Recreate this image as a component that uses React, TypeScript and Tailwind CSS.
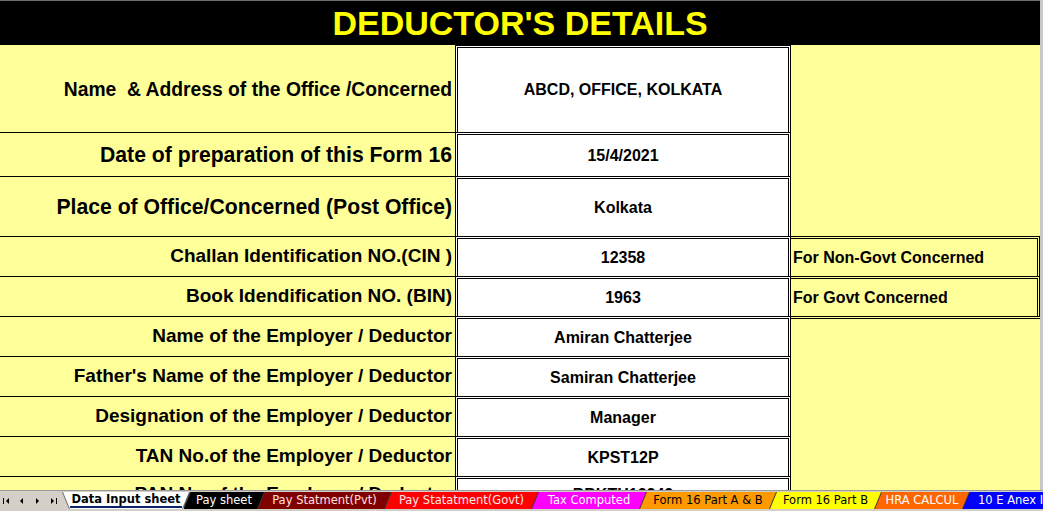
import React from "react";

interface SheetRow {
  label: string;
  value: string;
  size: string;
}

const rows: SheetRow[] = [
  { label: "Name  & Address of the Office /Concerned", value: "ABCD, OFFICE, KOLKATA", size: "text-[19.3px] pt-[3px]" },
  { label: "Date of preparation of this Form 16", value: "15/4/2021", size: "text-[21.2px]" },
  { label: "Place of Office/Concerned (Post Office)", value: "Kolkata", size: "text-[21.2px]" },
  { label: "Challan Identification NO.(CIN )", value: "12358", size: "text-[19px]" },
  { label: "Book Idendification NO. (BIN)", value: "1963", size: "text-[19px]" },
  { label: "Name of the Employer / Deductor", value: "Amiran Chatterjee", size: "text-[19px]" },
  { label: "Father's Name of the Employer / Deductor", value: "Samiran Chatterjee", size: "text-[19px]" },
  { label: "Designation of the Employer / Deductor", value: "Manager", size: "text-[19px]" },
  { label: "TAN No.of the Employer / Deductor", value: "KPST12P", size: "text-[19px]" },
  { label: "PAN No.of the Employer / Deductor", value: "BBKTH12342", size: "text-[19px]" },
];

const tabs = [
  { label: "Pay sheet", cls: "w-[80px] justify-center bg-black text-white" },
  { label: "Pay Statment(Pvt)", cls: "w-[133px] justify-center bg-[#800000] text-[#ffe0e0]" },
  { label: "Pay Statatment(Govt)", cls: "w-[153px] justify-center bg-[#ff0000] text-[#ffe8e8]" },
  { label: "Tax Computed", cls: "w-[114px] justify-center bg-[#ff00ff] text-white" },
  { label: "Form 16 Part A & B", cls: "w-[136px] justify-center bg-[#ff9900] text-black" },
  { label: "Form 16 Part B", cls: "w-[111px] justify-center bg-[#ffff00] text-black" },
  { label: "HRA CALCUL", cls: "w-[94px] justify-center bg-[#ff6600] text-white" },
  { label: "10 E Anex I", cls: "w-[110px] justify-start pl-[15px] bg-[#0000ff] text-white" },
];

const NavArrows = () => (
  <svg width="62" height="17" viewBox="0 0 62 17" className="shrink-0">
    {/* first */}
    <rect x="3" y="6" width="1" height="6" fill="#000" />
    <path d="M9 6 L6 9 L9 12 Z" fill="#000" />
    {/* prev */}
    <path d="M23 6 L20 9 L23 12 Z" fill="#000" />
    {/* next */}
    <path d="M36 6 L39 9 L36 12 Z" fill="#000" />
    {/* last */}
    <path d="M51 6 L54 9 L51 12 Z" fill="#000" />
    <rect x="56" y="6" width="1" height="6" fill="#000" />
  </svg>
);

export default function App() {
  return (
    <div className="flex h-[511px] w-[1043px] flex-col overflow-hidden bg-[#c8c8c8] font-['Liberation_Sans',Arial,sans-serif]">
      <div className="flex-1 overflow-hidden">
        <div className="w-[1040px]">
          {/* Title */}
          <div className="flex h-[45px] items-center justify-center border-t border-[#6d6d6d] bg-black">
            <span className="text-[34px] font-bold leading-none text-[#ffff00]">DEDUCTOR'S DETAILS</span>
          </div>

          {/* Sheet grid */}
          <div className="grid grid-cols-[455px_336px_249px] grid-rows-[87px_44px_60px_40px_40px_40px_40px_40px_40px_40px] bg-[#ffff99] text-black">
            {rows.map((row, i) => {
              const last = i === rows.length - 1;
              return (
                <React.Fragment key={i}>
                  <div
                    className={`flex justify-end whitespace-pre bg-[#ffff99] pr-[3px] font-bold ${
                      i > 0 ? "border-t border-black" : ""
                    } ${row.size} ${last ? "items-start pt-[3px]" : "items-center"}`}
                  >
                    {row.label}
                  </div>
                  <div
                    className={`flex justify-center border-x-[3px] border-t-[3px] border-double border-black bg-white text-[16px] font-bold ${
                      last ? "items-start pt-[4px]" : "items-center"
                    }`}
                  >
                    {row.value}
                  </div>
                  {i === 0 && <div className="row-span-3 bg-[#ffff99]" />}
                  {(i === 3 || i === 4) && (
                    <div className="flex items-center border-r-[3px] border-t-[3px] border-double border-black bg-[#ffff99] pl-[2px] text-[16px] font-bold">
                      {i === 3 ? "For Non-Govt Concerned" : "For Govt Concerned"}
                    </div>
                  )}
                  {i === 5 && <div className="row-span-5 border-t-[3px] border-double border-black bg-[#ffff99]" />}
                </React.Fragment>
              );
            })}
          </div>
        </div>
      </div>

      {/* Sheet tabs */}
      <div className="flex h-[21px] shrink-0 items-start overflow-hidden border-t border-[#9a9a9a] bg-[#d4d0c8] pt-[1px] font-['DejaVu_Sans',Tahoma,sans-serif] text-[11.5px]">
        <NavArrows />
        <div className="relative z-10 flex h-[17px] w-[128px] shrink-0 items-center justify-center bg-[#6a6a6a] [clip-path:polygon(0_0,100%_0,calc(100%-7px)_100%,7px_100%)]">
          <div className="flex h-[17px] w-[126px] items-center justify-center bg-white [clip-path:polygon(0_0,100%_0,calc(100%-7px)_100%,7px_100%)]">
            <span className="border-b-2 border-[#0a246a] px-[1px] font-bold leading-[13px] text-black">Data Input sheet</span>
          </div>
        </div>
        <div className="-ml-[6px] flex h-[17px] shrink-0 bg-[#3a3a3a]">
          {tabs.map((t, i) => (
            <div
              key={t.label}
              className={`flex h-[17px] shrink-0 items-center whitespace-nowrap [clip-path:polygon(7px_0,100%_0,calc(100%-7px)_100%,0_100%)] ${
                i > 0 ? "-ml-[6px]" : ""
              } ${t.cls}`}
            >
              {t.label}
            </div>
          ))}
        </div>
      </div>
    </div>
  );
}
